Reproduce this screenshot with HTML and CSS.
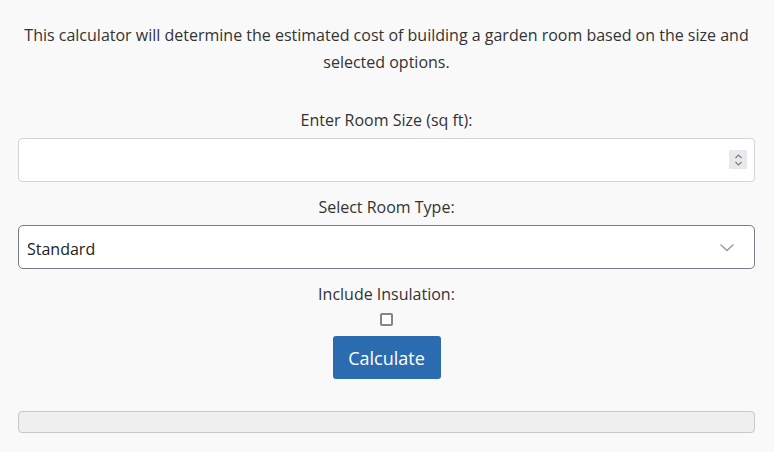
FILE: index.html
```html
<!DOCTYPE html>
<html>
<head>
<meta charset="utf-8">
<link rel="stylesheet" href="styles.css">
</head>
<body>
<main class="calc">
  <p class="intro">This calculator will determine the estimated cost of building a garden room based on the size and selected options.</p>
  <label class="lbl" for="size">Enter Room Size (sq ft):</label>
  <div class="field">
    <input class="ctrl" id="size" type="text">
    <span class="spin">
      <svg width="9" height="14" viewBox="0 0 9 14"><path d="M1.5 5 L4.5 2 L7.5 5 M1.5 9 L4.5 12 L7.5 9" fill="none" stroke="#7a7a80" stroke-width="1.1"/></svg>
    </span>
  </div>
  <label class="lbl" for="type">Select Room Type:</label>
  <div class="field">
    <select class="ctrl sel" id="type"><option>Standard</option></select>
    <svg class="chev" width="16" height="9" viewBox="0 0 16 9"><path d="M1.5 1.5 L8 7.5 L14.5 1.5" fill="none" stroke="#9a9a9a" stroke-width="1.4"/></svg>
  </div>
  <label class="lbl" for="ins">Include Insulation:</label>
  <div class="check-row"><span class="box" id="ins"></span></div>
  <div class="btn-row"><button class="btn">Calculate</button></div>
  <div class="result"></div>
</main>
</body>
</html>
```
FILE: styles.css
```css
html, body { margin: 0; padding: 0; background: #f9f9f9; }
body { font-family: "Open Sans", "Noto Sans", sans-serif; color: #333; font-size: 16px; }
.calc { padding: 22px 19px 0 18px; text-align: center; }
.intro { margin: 0; line-height: 27px; padding: 0 1px; }
.lbl { display: block; line-height: 27px; }
.intro + .lbl { margin-top: 31px; }
.field { position: relative; margin-top: 4px; }
.ctrl { display: block; box-sizing: border-box; width: 100%; height: 44px; margin: 0; background: #fff; border: 1px solid #d4d4d8; border-radius: 4px; font: inherit; color: #222; padding: 0 8px; text-align: left; outline: none; }
.field + .lbl { margin-top: 12px; }
.sel { appearance: none; -webkit-appearance: none; border-color: #767b85; border-radius: 5px; font-size: 16px; padding-top: 3px; }
.spin { position: absolute; right: 8px; top: 12px; width: 18px; height: 19px; background: #e9e9ed; display: flex; align-items: center; justify-content: center; }
.chev { position: absolute; right: 20px; top: 18px; }
.check-row { display: flex; justify-content: center; margin-top: 5px; }
.box { display: block; width: 13px; height: 13px; box-sizing: border-box; border: 2px solid #858585; border-radius: 2px; background: #fff; }
.btn-row { display: flex; justify-content: center; margin-top: 10px; }
.btn { width: 108px; height: 43px; background: #2b6cb0; color: #fff; border: none; border-radius: 3px; font: inherit; font-size: 18px; padding: 0; }
.result { margin-top: 32px; height: 22px; box-sizing: border-box; background: #efefef; border: 1px solid #c8c8c8; border-radius: 4px; }
```
